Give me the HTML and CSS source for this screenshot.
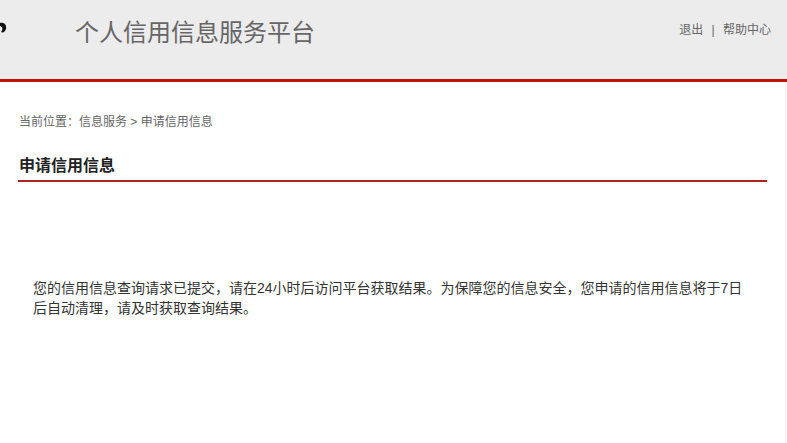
FILE: index.html
```html
<!DOCTYPE html>
<html lang="zh-CN">
<head>
  <meta charset="UTF-8" />
  <meta name="viewport" content="width=device-width, initial-scale=1.0"/>
  <title>个人信用信息服务平台</title>
  <link rel="stylesheet" href="styles.css">
</head>
<body>

  <div class="header">
    <div class="brand">
      <svg class="logo" width="8" height="16" viewBox="0 0 8 16">
        <path d="M0 2 C4 1 7 4 6 8 C5 11 3 12 1 11 C3 9 3 6 0 5 Z" fill="#111"/>
      </svg>
      <h1 class="site-title">个人信用信息服务平台</h1>
    </div>
    <div class="top-links">
      <a href="#">退出</a>
      <span class="sep">|</span>
      <a href="#">帮助中心</a>
    </div>
  </div>

  <div class="page">
    <div class="breadcrumb">当前位置：信息服务 &gt; 申请信用信息</div>
    <h2 class="section-title">申请信用信息</h2>
    <p class="notice">您的信用信息查询请求已提交，请在24小时后访问平台获取结果。为保障您的信息安全，您申请的信用信息将于7日后自动清理，请及时获取查询结果。</p>
  </div>

</body>
</html>
```

FILE: styles.css
```css
body {
  font-family: "Liberation Sans", "Noto Sans CJK SC", sans-serif;
  margin: 0;
  background: #fff;
  color: #333;
}

.header {
  display: flex;
  justify-content: space-between;
  align-items: flex-start;
  height: 79px;
  background: #ececec;
  border-bottom: 3px solid #c41200;
}

.brand {
  display: flex;
  align-items: flex-start;
}

.logo {
  margin-top: 21px;
}

.site-title {
  margin: 17px 0 0 67px;
  font-size: 24px;
  font-weight: normal;
  line-height: 32px;
  color: #666;
}

.top-links {
  margin: 21px 16px 0 0;
  font-size: 12px;
  line-height: 18px;
  color: #666;
}

.top-links a {
  color: #666;
  text-decoration: none;
}

.sep {
  margin: 0 5px;
}

.page {
  width: 749px;
  min-height: 330px;
  padding: 31px 18px 0 18px;
  border-right: 1px solid #eee;
}

.breadcrumb {
  padding-left: 1px;
  font-size: 12px;
  line-height: 18px;
  color: #666;
}

.section-title {
  margin: 23px 0 0 0;
  padding: 0 0 2px 1px;
  font-size: 16px;
  line-height: 24px;
  color: #222;
  border-bottom: 2px solid #b22222;
}

.notice {
  margin: 96px 0 0 0;
  padding: 0 15px;
  font-size: 14px;
  line-height: 20px;
  color: #333;
}
```
